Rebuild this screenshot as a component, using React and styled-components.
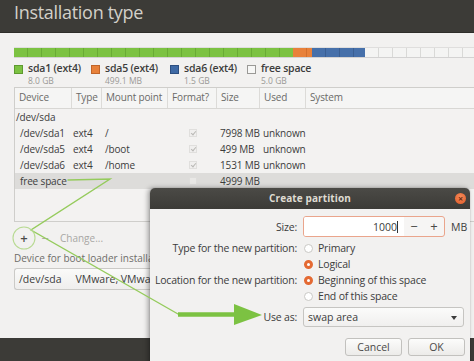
import React from "react";
import styled, { createGlobalStyle } from "styled-components";

const GlobalStyle = createGlobalStyle`
  html, body {
    margin: 0;
    padding: 0;
  }
  body {
    background: #3c3b37;
    font-family: "Open Sans", "DejaVu Sans", sans-serif;
    color: #3c3c3c;
    overflow: hidden;
  }
`;

const columns = [
  { key: "device", title: "Device", width: 57 },
  { key: "type", title: "Type", width: 30 },
  { key: "mount", title: "Mount point", width: 66 },
  { key: "format", title: "Format?", width: 49 },
  { key: "size", title: "Size", width: 43 },
  { key: "used", title: "Used", width: 46 },
  { key: "system", title: "System", width: 254 },
];

const rows = [
  { device: "/dev/sda", top: true },
  { device: "/dev/sda1", type: "ext4", mount: "/", format: true, size: "7998 MB", used: "unknown" },
  { device: "/dev/sda5", type: "ext4", mount: "/boot", format: true, size: "499 MB", used: "unknown" },
  { device: "/dev/sda6", type: "ext4", mount: "/home", format: true, size: "1531 MB", used: "unknown" },
  { device: "free space", format: "off", size: "4999 MB", selected: true },
];

const legend = [
  { name: "sda1 (ext4)", size: "8.0 GB", color: "#7cc242", border: "#5e9a2f" },
  { name: "sda5 (ext4)", size: "499.1 MB", color: "#e8813a", border: "#c0652a" },
  { name: "sda6 (ext4)", size: "1.5 GB", color: "#3f6aa5", border: "#2d4f80" },
  { name: "free space", size: "5.0 GB", color: "#f7f7f6", border: "#9a9996" },
];

const App = () => {
  return (
    <Page>
      <GlobalStyle />
      <Window>
        <Header>Installation type</Header>
        <Content>
          <PartitionBar>
            <Segment $w={279} $c="#7cc242" $line="#69ab35" />
            <Segment $w={19} $c="#e8813a" $line="#d46f2c" />
            <Segment $w={53} $c="#4670aa" $line="#3a5f93" />
            <Segment $w={200} $c="#f4f4f3" $line="#d9d9d7" />
          </PartitionBar>

          <Legend>
            {legend.map((item) => (
              <LegendItem key={item.name}>
                <Swatch $c={item.color} $b={item.border} />
                <div>
                  <LegendName>{item.name}</LegendName>
                  <LegendSize>{item.size}</LegendSize>
                </div>
              </LegendItem>
            ))}
          </Legend>

          <Table>
            <HeadRow>
              {columns.map((c) => (
                <HeadCell key={c.key} $w={c.width}>
                  {c.title}
                </HeadCell>
              ))}
            </HeadRow>
            {rows.map((r) => (
              <BodyRow key={r.device} $selected={r.selected}>
                {columns.map((c) => (
                  <Cell
                    key={c.key}
                    $w={c.width}
                    $center={c.key === "format"}
                    $pad={c.key === "device" ? (r.top ? 1 : 5) : c.key === "type" ? 1 : 3}
                  >
                    {c.key === "format" ? r.format ? <Check $off={r.format === "off"} /> : null : r[c.key]}
                  </Cell>
                ))}
              </BodyRow>
            ))}
          </Table>

          <Toolbar>
            <ToolButton>+</ToolButton>
            <ToolButton $dim>−</ToolButton>
            <ChangeLink>Change...</ChangeLink>
          </Toolbar>

          <BootLabel>Device for boot loader installation:</BootLabel>
          <BootCombo>
            <span>/dev/sda</span>
            <span>VMware, VMware Virtual S (21.5 GB)</span>
          </BootCombo>
        </Content>
      </Window>

      <Dialog>
        <DialogTitle>
          Create partition
          <CloseButton>×</CloseButton>
        </DialogTitle>
        <DialogBody>
          <FormRow $h={21}>
            <Label>Size:</Label>
            <SpinLine>
              <SpinBox>
                <Entry>
                  <Caret>1000</Caret>
                </Entry>
                <SpinButton>−</SpinButton>
                <SpinButton>+</SpinButton>
              </SpinBox>
              <Unit>MB</Unit>
            </SpinLine>
          </FormRow>

          <FormRow $h={16} $mt={3}>
            <Label>Type for the new partition:</Label>
            <RadioOption>
              <Radio />
              Primary
            </RadioOption>
          </FormRow>
          <FormRow $h={16}>
            <Label />
            <RadioOption>
              <Radio $checked />
              Logical
            </RadioOption>
          </FormRow>
          <FormRow $h={16}>
            <Label>Location for the new partition:</Label>
            <RadioOption>
              <Radio $checked />
              Beginning of this space
            </RadioOption>
          </FormRow>
          <FormRow $h={16}>
            <Label />
            <RadioOption>
              <Radio />
              End of this space
            </RadioOption>
          </FormRow>

          <FormRow $h={20} $mt={3}>
            <Label>Use as:</Label>
            <Combo>
              swap area
              <ComboArrow />
            </Combo>
          </FormRow>

          <ButtonRow>
            <PushButton>Cancel</PushButton>
            <PushButton>OK</PushButton>
          </ButtonRow>
        </DialogBody>
      </Dialog>

      <Annotations width="474" height="361" viewBox="0 0 474 361">
        <g stroke="#95cb5c" strokeWidth="1.4" fill="none" strokeLinecap="round">
          <polyline points="68,180 110,179 31,230 178,314" />
          <circle cx="24" cy="238" r="11" strokeWidth="1.1" stroke="#b8da93" />
        </g>
        <line x1="178" y1="314.5" x2="240" y2="314.5" stroke="#7cc242" strokeWidth="4.5" />
        <polygon points="234,304 262,315 234,325" fill="#7cc242" />
      </Annotations>
    </Page>
  );
};

export default App;

const Page = styled.div`
  position: relative;
  width: 474px;
  height: 361px;
  overflow: hidden;
`;

const Window = styled.div`
  width: 560px;
  height: 338px;
  background: #f2f1f0;
  display: flex;
  flex-direction: column;
`;

const Header = styled.div`
  height: 33px;
  flex: none;
  background: #3c3b37;
  color: #d3d0c9;
  font-size: 18px;
  letter-spacing: -0.3px;
  line-height: 24px;
  padding-left: 14px;
  box-sizing: border-box;
  border-bottom: 1px solid #2e2d2a;
`;

const Content = styled.div`
  padding: 14px 0 0 14px;
  display: flex;
  flex-direction: column;
  align-items: flex-start;
`;

const PartitionBar = styled.div`
  display: flex;
  height: 9px;
  border-top: 1px solid rgba(0, 0, 0, 0.08);
  border-bottom: 1px solid rgba(0, 0, 0, 0.12);
`;

const Segment = styled.div`
  width: ${(p) => p.$w}px;
  height: 100%;
  background: repeating-linear-gradient(
    90deg,
    ${(p) => p.$c} 0 13px,
    ${(p) => p.$line} 13px 14px
  );
`;

const Legend = styled.div`
  display: grid;
  grid-template-columns: 77px 79px 77px auto;
  margin-top: 4px;
`;

const LegendItem = styled.div`
  display: flex;
  gap: 5px;
`;

const Swatch = styled.div`
  width: 7px;
  height: 7px;
  margin-top: 3px;
  background: ${(p) => p.$c};
  border: 1px solid ${(p) => p.$b};
`;

const LegendName = styled.div`
  font-size: 10.5px;
  letter-spacing: -0.2px;
  line-height: 13px;
  font-weight: 600;
  color: #3d3d3d;
  white-space: nowrap;
`;

const LegendSize = styled.div`
  font-size: 8.5px;
  line-height: 11px;
  color: #9a9996;
`;

const Table = styled.div`
  margin-top: 1px;
  width: 560px;
  height: 135px;
  box-sizing: border-box;
  border: 1px solid #cfcecb;
  border-right: none;
  background: #f3f2f1;
  font-size: 10px;
  letter-spacing: -0.15px;
`;

const HeadRow = styled.div`
  display: flex;
  height: 20px;
  border-bottom: 1px solid #d8d7d4;
  background: #f5f5f4;
`;

const HeadCell = styled.div`
  width: ${(p) => p.$w}px;
  flex: none;
  box-sizing: border-box;
  padding-left: 4px;
  border-right: 1px solid #dcdbd8;
  line-height: 19px;
  color: #6a6a68;
  white-space: nowrap;
`;

const BodyRow = styled.div`
  display: flex;
  height: 16px;
  background: ${(p) => (p.$selected ? "#dddcda" : "transparent")};
`;

const Cell = styled.div`
  width: ${(p) => p.$w}px;
  flex: none;
  box-sizing: border-box;
  padding-left: ${(p) => (p.$center ? 0 : p.$pad)}px;
  line-height: 16px;
  white-space: nowrap;
  display: flex;
  align-items: center;
  justify-content: ${(p) => (p.$center ? "center" : "flex-start")};
  color: #3c3c3c;
`;

const Check = styled.div`
  width: 8px;
  height: 8px;
  box-sizing: border-box;
  border: 1px solid ${(p) => (p.$off ? "#dedddb" : "#e0dfdd")};
  background: ${(p) => (p.$off ? "#e9e8e6" : "#f0efee")};
  position: relative;

  &::after {
    content: ${(p) => (p.$off ? "none" : '""')};
    position: absolute;
    left: 2px;
    top: 0;
    width: 2px;
    height: 4px;
    border: solid #b9b8b5;
    border-width: 0 1px 1px 0;
    transform: rotate(40deg);
  }
`;

const Toolbar = styled.div`
  display: flex;
  align-items: center;
  height: 20px;
  margin-top: 6px;
`;

const ToolButton = styled.div`
  width: 20px;
  text-align: center;
  font-size: 13px;
  line-height: 20px;
  color: ${(p) => (p.$dim ? "#a8a7a4" : "#4a4a48")};
  font-weight: ${(p) => (p.$dim ? 400 : 600)};
  margin-right: 1px;
`;

const ChangeLink = styled.div`
  margin-left: 4px;
  font-size: 10px;
  color: #a8a7a4;
`;

const BootLabel = styled.div`
  margin-top: 3px;
  font-size: 10px;
  line-height: 14px;
  color: #6e6d6a;
  white-space: nowrap;
`;

const BootCombo = styled.div`
  margin-top: 3px;
  width: 140px;
  height: 22px;
  box-sizing: border-box;
  border: 1px solid #cbcac7;
  border-right: none;
  border-radius: 3px 0 0 3px;
  background: linear-gradient(#fafaf9, #efeeed);
  display: flex;
  align-items: center;
  gap: 14px;
  padding-left: 4px;
  font-size: 10.5px;
  white-space: nowrap;
  overflow: hidden;
`;

const Dialog = styled.div`
  position: absolute;
  left: 150px;
  top: 188px;
  width: 320px;
  height: 190px;
  background: #f2f1f0;
  border-radius: 5px 5px 0 0;
  box-shadow: -2px 0 5px rgba(0, 0, 0, 0.35), 0 0 1px rgba(0, 0, 0, 0.4);
  font-size: 10px;
  overflow: hidden;
`;

const DialogTitle = styled.div`
  position: relative;
  height: 21px;
  background: linear-gradient(#4b4a46, #3c3b37);
  color: #dfdbd2;
  font-weight: 700;
  font-size: 10px;
  line-height: 21px;
  text-align: center;
  letter-spacing: 0.1px;
`;

const CloseButton = styled.div`
  position: absolute;
  right: 4px;
  top: 5px;
  width: 11px;
  height: 11px;
  border-radius: 50%;
  background: radial-gradient(circle at 50% 35%, #f58a5a, #df5a27);
  color: #6b2b12;
  font-size: 9px;
  line-height: 11px;
  text-align: center;
  font-weight: 700;
`;

const DialogBody = styled.div`
  padding: 7px 6px 0 0;
  display: flex;
  flex-direction: column;
`;

const FormRow = styled.div`
  display: grid;
  grid-template-columns: 147px 1fr;
  column-gap: 6px;
  align-items: center;
  height: ${(p) => p.$h}px;
  margin-top: ${(p) => p.$mt || 0}px;
`;

const Label = styled.div`
  text-align: right;
  white-space: nowrap;
  color: #3c3c3c;
  font-size: 10.5px;
  letter-spacing: -0.2px;
`;

const SpinLine = styled.div`
  display: flex;
  align-items: center;
  height: 100%;
  font-size: 10.5px;
`;

const SpinBox = styled.div`
  display: flex;
  width: 142px;
  height: 21px;
  box-sizing: border-box;
  border: 1px solid #eaa58c;
  border-radius: 3px;
  overflow: hidden;
  background: #f6f5f4;
`;

const Entry = styled.div`
  width: 100px;
  background: #ffffff;
  display: flex;
  align-items: center;
  justify-content: flex-end;
  padding-right: 6px;
  box-sizing: border-box;
`;

const Caret = styled.span`
  border-right: 1px solid #333;
  line-height: 12px;
`;

const SpinButton = styled.div`
  flex: 1;
  text-align: center;
  line-height: 19px;
  font-size: 13px;
  color: #4a4a48;
`;

const Unit = styled.div`
  margin-left: 6px;
`;

const RadioOption = styled.div`
  display: flex;
  align-items: center;
  gap: 5px;
  white-space: nowrap;
  margin-left: 1px;
  font-size: 10.5px;
  letter-spacing: -0.2px;
`;

const Radio = styled.div`
  width: 9px;
  height: 9px;
  border-radius: 50%;
  box-sizing: border-box;
  border: ${(p) => (p.$checked ? "3px solid #e46a33" : "1px solid #c9c8c5")};
  background: #ffffff;
`;

const Combo = styled.div`
  position: relative;
  height: 20px;
  box-sizing: border-box;
  border: 1px solid #c6c5c2;
  border-radius: 3px;
  background: linear-gradient(#fbfbfa, #f0efee);
  line-height: 18px;
  padding-left: 4px;
  font-size: 10.5px;
`;

const ComboArrow = styled.div`
  position: absolute;
  right: 6px;
  top: 8px;
  width: 0;
  height: 0;
  border-left: 3px solid transparent;
  border-right: 3px solid transparent;
  border-top: 4px solid #3c3c3c;
`;

const ButtonRow = styled.div`
  display: flex;
  justify-content: flex-end;
  gap: 6px;
  margin-top: 11px;
  margin-right: -1px;
`;

const PushButton = styled.div`
  width: 57px;
  height: 18px;
  box-sizing: border-box;
  border: 1px solid #c2c1be;
  border-radius: 3px;
  background: linear-gradient(#fcfcfb, #ecebe9);
  text-align: center;
  line-height: 16px;
  color: #4a4a48;
  font-size: 10.5px;
`;

const Annotations = styled.svg`
  position: absolute;
  left: 0;
  top: 0;
  pointer-events: none;
`;
